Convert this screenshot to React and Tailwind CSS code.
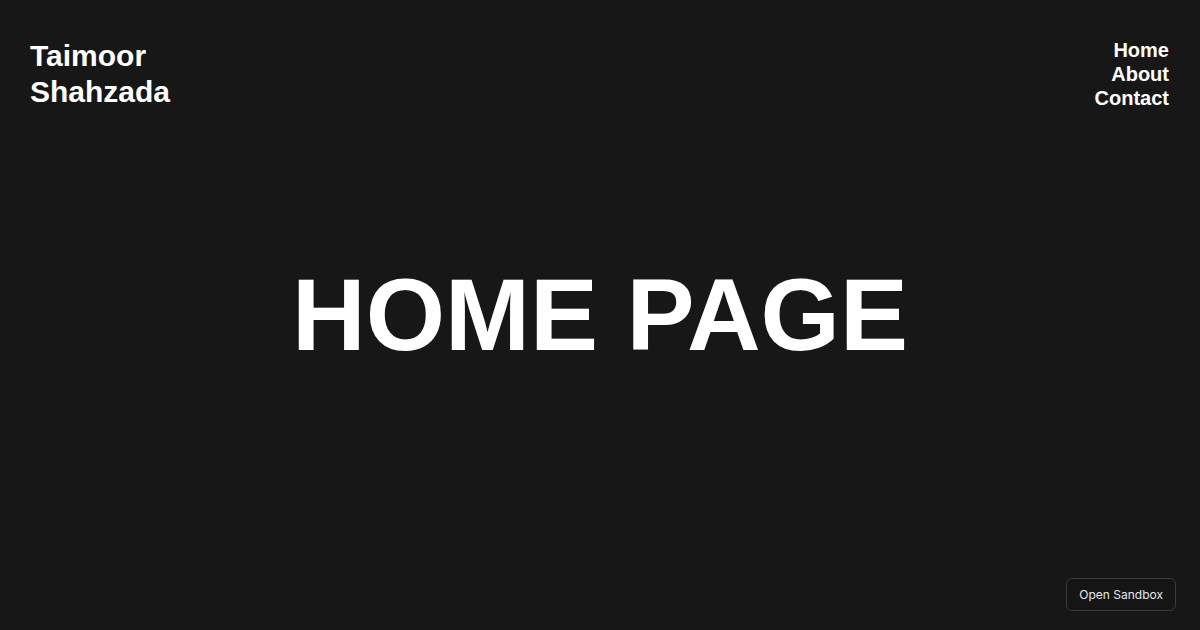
import React from 'react';

export default function App() {
  const links = ['Home', 'About', 'Contact'];

  return (
    <div className="w-full h-screen bg-[#171717] text-white flex flex-col overflow-hidden font-['Liberation_Sans',Arial,sans-serif]">
      {/* header */}
      <header className="h-[108px] flex justify-between items-start pt-[38px] pl-[30px] pr-[31px]">
        <div className="text-[30px] leading-[36px] font-bold">
          Taimoor
          <br />
          Shahzada
        </div>
        <nav className="flex flex-col items-end text-[20px] leading-6 font-bold">
          {links.map((l) => (
            <a key={l} href="#" className="text-white">
              {l}
            </a>
          ))}
        </nav>
      </header>

      {/* main */}
      <main className="flex-1 flex items-center justify-center">
        <h1 className="text-[102px] leading-none font-bold tracking-normal">HOME PAGE</h1>
      </main>

      {/* footer */}
      <footer className="h-[108px] flex items-end justify-end pr-[24px] pb-[19px]">
        <button className="h-[33px] px-[12px] rounded-md border border-[#3a3a3a] bg-[#151515] text-[12px] text-[#e8e8e8] font-['Inter',sans-serif]">
          Open Sandbox
        </button>
      </footer>
    </div>
  );
}
